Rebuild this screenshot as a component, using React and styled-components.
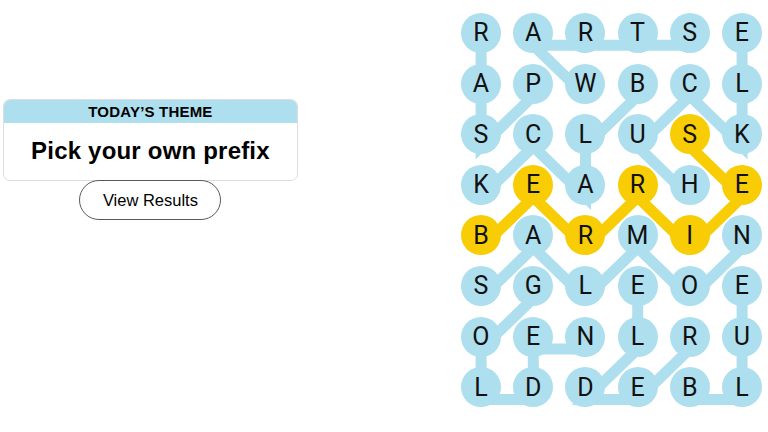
import React from 'react';
import styled, { createGlobalStyle } from 'styled-components';

const Global = createGlobalStyle`
  html, body { margin: 0; padding: 0; background: #ffffff; }
  body { font-family: "Liberation Sans", Arial, sans-serif; color: #000; }
`;

const PX = 52.2;
const PY = 50.6;
const DY = 12;
const BLUE = '#aedfee';
const YELLOW = '#f8cd05';

const LETTERS = ['RARTSE', 'APWBCL', 'SCLUSK', 'KEARHE', 'BARMIN', 'SGLEOE', 'OENLRU', 'LDDEBL'];

const WORDS = [
  [[0, 0], [1, 0], [2, 0], [1, 1]],
  [[0, 4], [0, 3], [0, 2], [0, 1], [1, 2]],
  [[3, 4], [2, 3], [1, 4], [2, 5], [1, 5], [0, 5]],
  [[1, 3], [2, 2], [3, 2], [2, 1], [3, 0]],
  [[5, 0], [4, 1], [5, 2], [4, 3], [5, 4], [4, 5]],
  [[5, 1], [6, 0], [7, 0], [7, 1], [6, 1], [6, 2]],
  [[5, 3], [6, 3], [7, 2], [7, 3], [6, 4]],
  [[7, 4], [7, 5], [6, 5], [5, 5]],
];
const SPAN = [[4, 0], [3, 1], [4, 2], [3, 3], [4, 4], [3, 5], [2, 4]];
const spanSet = new Set(SPAN.map(([r, c]) => `${r}-${c}`));

const Page = styled.div`
  display: flex;
  width: 768px;
  height: 432px;
  overflow: hidden;
`;

const Side = styled.div`
  width: 296px;
  margin-left: 3px;
  padding-top: 99px;
  display: flex;
  flex-direction: column;
  align-items: center;
`;

const ThemeCard = styled.div`
  width: 100%;
  box-sizing: border-box;
  border: 1px solid #dedede;
  border-radius: 7px;
  overflow: hidden;
  background: #fff;
`;

const ThemeHeader = styled.div`
  background: ${BLUE};
  height: 23px;
  display: flex;
  align-items: center;
  justify-content: center;
  font-weight: 700;
  font-size: 15px;
  letter-spacing: 0.2px;
`;

const ThemeTitle = styled.div`
  height: 57px;
  display: flex;
  align-items: center;
  justify-content: center;
  font-weight: 700;
  font-size: 24px;
  letter-spacing: 0.2px;
  padding-bottom: 2px;
  box-sizing: border-box;
`;

const ResultsButton = styled.button`
  margin-top: -1px;
  width: 142px;
  height: 40px;
  border: 1px solid #5a5a5a;
  border-radius: 20px;
  background: #fff;
  font-family: "Liberation Sans", Arial, sans-serif;
  font-size: 16.5px;
  color: #000;
  padding: 0;
`;

const Board = styled.div`
  position: relative;
  margin-left: 157px;
  margin-top: 7.7px;
  width: ${PX * 6}px;
  height: ${PY * 8}px;
  display: grid;
  grid-template-columns: repeat(6, ${PX}px);
  grid-template-rows: repeat(8, ${PY}px);
`;

const Lines = styled.svg`
  position: absolute;
  left: 0;
  top: 0;
  z-index: 0;
`;

const Letter = styled.div`
  position: relative;
  z-index: 1;
  justify-self: center;
  align-self: center;
  width: 40px;
  height: 40px;
  border-radius: 50%;
  background: ${(p) => (p.$span ? YELLOW : BLUE)};
  display: flex;
  align-items: center;
  justify-content: center;
  font-family: Roboto, "Liberation Sans", sans-serif;
  font-size: 25px;
  font-weight: 400;
  line-height: 1;
  color: #111;
`;

const pt = ([r, c]) => `${(c + 0.5) * PX},${(r + 0.5) * PY + DY}`;

export default function App() {
  return (
    <>
      <Global />
      <Page>
        <Side>
          <ThemeCard>
            <ThemeHeader>TODAY’S THEME</ThemeHeader>
            <ThemeTitle>Pick your own prefix</ThemeTitle>
          </ThemeCard>
          <ResultsButton>View Results</ResultsButton>
        </Side>
        <Board>
          <Lines width={PX * 6} height={PY * 8}>
            {WORDS.map((w, i) => (
              <polyline
                key={i}
                points={w.map(pt).join(' ')}
                fill="none"
                stroke={BLUE}
                strokeWidth="11"
                strokeLinejoin="miter"
              />
            ))}
            <polyline
              points={SPAN.map(pt).join(' ')}
              fill="none"
              stroke={YELLOW}
              strokeWidth="11"
              strokeLinejoin="miter"
            />
          </Lines>
          {LETTERS.map((row, r) =>
            row.split('').map((ch, c) => (
              <Letter key={`${r}-${c}`} $span={spanSet.has(`${r}-${c}`)}>
                {ch}
              </Letter>
            ))
          )}
        </Board>
      </Page>
    </>
  );
}
